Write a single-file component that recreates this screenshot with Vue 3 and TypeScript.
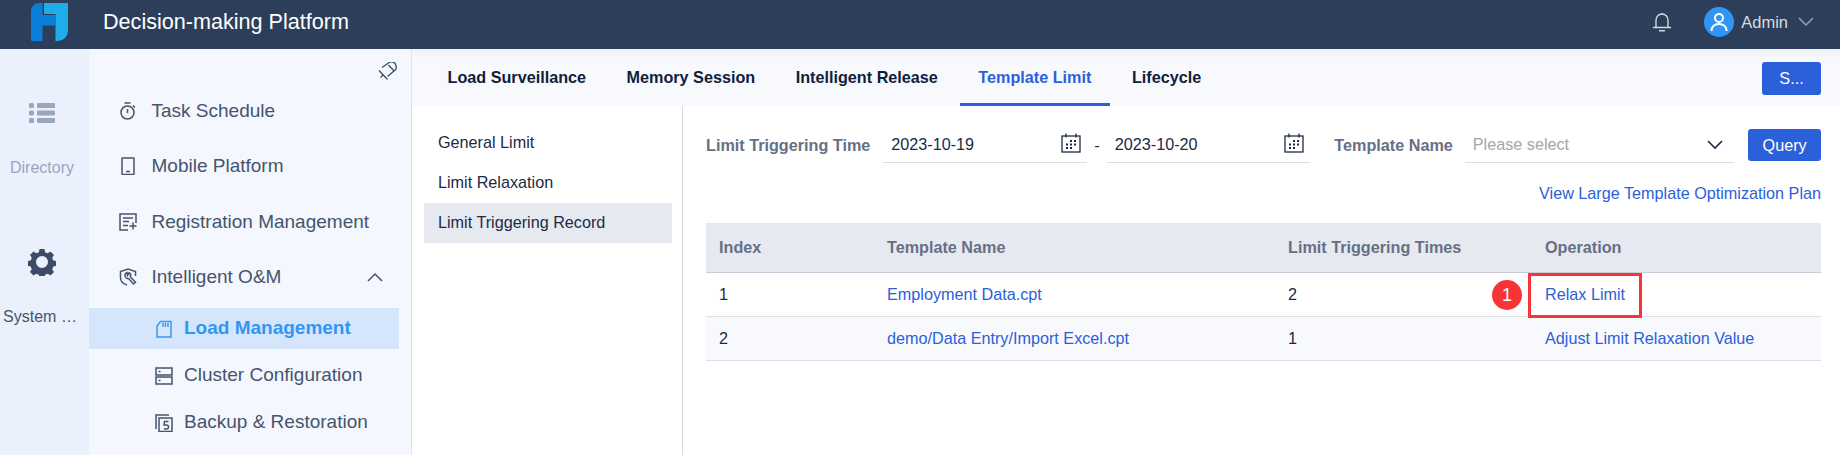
<template>
  <div class="app">
    <header class="topbar">
      <svg class="logo" viewBox="0 0 37 38" width="37" height="38">
        <path d="M8 0h3.500v12H24v10.500H11.500V38H1a1 1 0 0 1-1-1V8a8 8 0 0 1 8-8z" fill="#0a7fd8" />
        <path d="M13 0h23a1 1 0 0 1 1 1v27a10 10 0 0 1-10 10h-2.500V11H13z" fill="#1fade9" />
      </svg>
      <span class="brand">Decision-making Platform</span>
      <div class="topbar-right">
        <svg class="bell" viewBox="0 0 20 20" width="20" height="20" fill="none" stroke="#d4d8df" stroke-width="1.400">
          <path d="M1.500 15.500h17M4 15.500V8a6 6 0 0 1 12 0v7.500M7.500 18.800h5" stroke-linecap="round" />
          <path d="M10 1v1" />
        </svg>
        <span class="avatar">
          <svg viewBox="0 0 30 30" width="30" height="30" fill="none" stroke="#fff" stroke-width="2">
            <circle cx="15" cy="11" r="4" />
            <path d="M7.500 24c0-4.500 3.200-7 7.500-7s7.500 2.500 7.500 7" />
          </svg>
        </span>
        <span class="admin">Admin</span>
        <svg class="admin-arrow" viewBox="0 0 16 10" width="16" height="10" fill="none" stroke="#9aa3b0" stroke-width="1.500">
          <path d="M1 1l7 7 7-7" />
        </svg>
      </div>
    </header>

    <div class="body">
      <aside class="rail">
        <div class="rail-item">
          <svg viewBox="0 0 26 22" width="26" height="22" fill="#9aa6bc">
            <rect x="0" y="1" width="5" height="5" rx="1.500" />
            <rect x="8" y="1" width="18" height="5" rx="1" />
            <rect x="0" y="8.500" width="5" height="5" rx="1.500" />
            <rect x="8" y="8.500" width="18" height="5" rx="1" />
            <rect x="0" y="16" width="5" height="5" rx="1.500" />
            <rect x="8" y="16" width="18" height="5" rx="1" />
          </svg>
          <span class="rail-label">Directory</span>
        </div>
        <div class="rail-item rail-item--active">
          <svg viewBox="0 0 28 28" width="28" height="28">
            <path
              fill="#3d4b66"
              fill-rule="evenodd"
              d="M11.500 1h5l.6 3.200 2.600 1.100 2.800-1.800 3.500 3.500-1.800 2.800 1.100 2.600 3.200.6v5l-3.200.6-1.100 2.600 1.800 2.800-3.500 3.500-2.800-1.800-2.600 1.100-.6 3.200h-5l-.6-3.200-2.600-1.100-2.800 1.800-3.500-3.500 1.800-2.800-1.100-2.600-3.200-.6v-5l3.200-.6 1.100-2.600-1.800-2.800 3.500-3.500 2.800 1.800 2.600-1.100zM14 8a6 6 0 1 0 0 12 6 6 0 0 0 0-12z"
            />
          </svg>
          <span class="rail-label rail-label--dark">System …</span>
        </div>
      </aside>

      <nav class="sidebar">
        <div class="pin-row">
          <svg viewBox="0 0 20 20" width="20" height="20" fill="none" stroke="#3d4b66" stroke-width="1.300">
            <path d="M1 8.500l8.500 9M4 5.500L10.500 1M9.500 14.500l6.500-5.500" />
            <path d="M10.500 1a4.500 4.500 0 0 1 7.500 3c.8 2-.5 4-2 5L10.500 3" />
            <path d="M5 13l-2.500 2.500" />
          </svg>
        </div>
        <div v-for="item in menu" :key="item.label" class="menu-row">
          <svg class="menu-icon" viewBox="0 0 18 18" width="18" height="18" fill="none" stroke="#46546d" stroke-width="1.500" v-html="item.icon"></svg>
          <span>{{ item.label }}</span>
          <svg v-if="item.open" class="menu-caret" viewBox="0 0 16 10" width="16" height="10" fill="none" stroke="#46546d" stroke-width="1.500">
            <path d="M1 9l7-7 7 7" />
          </svg>
        </div>
        <div class="submenu">
          <div v-for="item in subMenu" :key="item.label" class="sub-row" :class="{ 'sub-row--active': item.active }">
            <svg class="menu-icon" viewBox="0 0 18 18" width="18" height="18" fill="none" :stroke="item.active ? '#3b96f5' : '#46546d'" stroke-width="1.500" v-html="item.icon"></svg>
            <span class="sub-label">{{ item.label }}</span>
          </div>
        </div>
      </nav>

      <main class="main">
        <div class="tabs">
          <div v-for="tab in tabs" :key="tab" class="tab" :class="{ 'tab--active': tab === 'Template Limit' }">{{ tab }}</div>
          <button class="btn btn--save">S...</button>
        </div>

        <div class="panel">
          <div class="side-tabs">
            <div v-for="item in sideTabs" :key="item" class="side-tab" :class="{ 'side-tab--active': item === 'Limit Triggering Record' }">{{ item }}</div>
          </div>

          <div class="content">
            <div class="filters">
              <label class="filter-label">Limit Triggering Time</label>
              <div class="field field--date field--start">
                <span>2023-10-19</span>
                <svg class="calendar" viewBox="0 0 20 20" width="20" height="20" v-html="calendarIcon"></svg>
              </div>
              <span class="dash">-</span>
              <div class="field field--date">
                <span>2023-10-20</span>
                <svg class="calendar" viewBox="0 0 20 20" width="20" height="20" v-html="calendarIcon"></svg>
              </div>
              <label class="filter-label filter-label--second">Template Name</label>
              <div class="field field--select">
                <span class="placeholder">Please select</span>
                <svg viewBox="0 0 16 10" width="16" height="10" fill="none" stroke="#1c2b45" stroke-width="1.600">
                  <path d="M1 1l7 7 7-7" />
                </svg>
              </div>
              <button class="btn btn--query">Query</button>
            </div>

            <div class="plan-row">
              <a class="link">View Large Template Optimization Plan</a>
            </div>

            <div class="table">
              <div class="tr tr--head">
                <div>Index</div>
                <div>Template Name</div>
                <div>Limit Triggering Times</div>
                <div>Operation</div>
              </div>
              <div v-for="(row, i) in rows" :key="row.index" class="tr" :class="{ 'tr--alt': i % 2 === 1 }">
                <div>{{ row.index }}</div>
                <div class="link">{{ row.name }}</div>
                <div>{{ row.times }}</div>
                <div class="link op-cell">
                  {{ row.op }}
                  <template v-if="i === 0">
                    <span class="mark"></span>
                    <span class="badge">1</span>
                  </template>
                </div>
              </div>
            </div>
          </div>
        </div>
      </main>
    </div>
  </div>
</template>

<script setup lang="ts">
const menu = [
  {
    label: 'Task Schedule',
    icon: '<circle cx="8.500" cy="10.500" r="6.500" /><path d="M5.500 1h6M8.500 7v4M14 3.500l2 2" />'
  },
  {
    label: 'Mobile Platform',
    icon: '<rect x="3" y="1" width="12" height="16.500" rx=".5" /><path d="M7 14.500h4" />'
  },
  {
    label: 'Registration Management',
    icon: '<path d="M17 10V1H1v16h8" /><path d="M4 5h10M4 8.500h6M4 12.500h5M10.500 13h7M14 9.500v7" />'
  },
  {
    label: 'Intelligent O&M',
    open: true,
    icon: '<path d="M16.500 8V3.500L9 1 1.500 3.500V10c0 3.500 3.500 6 6.500 7" /><path d="M8 4.500a3.500 3.500 0 0 0-2 3.500c.3 2 2.200 3 3.800 2.800L14.500 16l2-1.800-5-5.200c.4-1.500 0-3.500-1.500-4.200L8.500 7.500z" />'
  }
]

const subMenu = [
  {
    label: 'Load Management',
    active: true,
    icon: '<path d="M5.500 1.500h10.500V17H2V6z" /><path d="M8 3v4M10.500 3v4M13 3v4" />'
  },
  {
    label: 'Cluster Configuration',
    icon: '<rect x="1" y="1" width="16" height="7" /><rect x="1" y="10" width="16" height="7" /><path d="M3.500 4.500h2M3.500 13.500h2" />'
  },
  {
    label: 'Backup & Restoration',
    icon: '<path d="M1 15V1h13" /><path d="M17 4H4v13.500h13z" /><path d="M13.500 7.500h-4L9 11h2.500a2 2 0 0 1 0 4H9" />'
  }
]

const tabs = ['Load Surveillance', 'Memory Session', 'Intelligent Release', 'Template Limit', 'Lifecycle']
const sideTabs = ['General Limit', 'Limit Relaxation', 'Limit Triggering Record']

const calendarIcon =
  '<rect x="1" y="3" width="18" height="16" fill="none" stroke="#1c2b45" stroke-width="1.300" /><path d="M5 .5v4M15 .5v4" stroke="#1c2b45" stroke-width="1.300" /><g fill="#1c2b45"><rect x="9" y="7" width="2" height="2" /><rect x="13" y="7" width="2" height="2" /><rect x="5" y="10.500" width="2" height="2" /><rect x="9" y="10.500" width="2" height="2" /><rect x="13" y="10.500" width="2" height="2" /><rect x="5" y="14" width="2" height="2" /><rect x="9" y="14" width="2" height="2" /></g>'

const rows = [
  { index: 1, name: 'Employment Data.cpt', times: 2, op: 'Relax Limit' },
  { index: 2, name: 'demo/Data Entry/Import Excel.cpt', times: 1, op: 'Adjust Limit Relaxation Value' }
]
</script>

<style>
html,
body {
  margin: 0;
  overflow: hidden;
}
</style>

<style scoped>
.app {
  width: 1840px;
  height: 455px;
  overflow: hidden;
  font-family: 'Liberation Sans', Arial, sans-serif;
  font-size: 16.200px;
  color: #1c2b45;
  background: #fff;
}

.topbar {
  height: 49px;
  box-sizing: border-box;
  padding-bottom: 5px;
  display: flex;
  align-items: center;
  background: #2c3e5a;
  color: #fff;
}

.logo {
  margin-left: 31px;
  flex-shrink: 0;
}

.brand {
  margin-left: 35px;
  font-size: 21.600px;
}

.topbar-right {
  margin-left: auto;
  display: flex;
  align-items: center;
  padding-right: 26px;
}

.avatar {
  width: 30px;
  height: 30px;
  margin-left: 32px;
  border-radius: 50%;
  background: #3096f5;
  display: flex;
}

.admin {
  margin-left: 7px;
  font-size: 16.500px;
  color: #d8dce2;
}

.admin-arrow {
  margin-left: 10px;
}

.body {
  display: flex;
  height: 406px;
}

.rail {
  width: 89px;
  flex-shrink: 0;
  background: #eaf1fd;
  display: flex;
  flex-direction: column;
  align-items: center;
  padding: 53px 5px 0 0;
  box-sizing: border-box;
}

.rail-item {
  display: flex;
  flex-direction: column;
  align-items: center;
  height: 146px;
}

.rail-label {
  margin-top: 35px;
  font-size: 16px;
  white-space: nowrap;
  color: #9aa6bc;
}

.rail-label--dark {
  margin-top: 32px;
  margin-right: 4px;
  color: #46546d;
}

.sidebar {
  width: 323px;
  flex-shrink: 0;
  background: #f4f7fe;
  border-right: 1px solid #dde2ec;
  box-sizing: border-box;
  color: #46546d;
  font-size: 19px;
}

.pin-row {
  height: 34px;
  box-sizing: border-box;
  padding: 13px 13px 0 0;
  display: flex;
  justify-content: flex-end;
}

.menu-row {
  height: 55.500px;
  display: flex;
  align-items: center;
  padding-left: 30px;
}

.menu-icon {
  flex-shrink: 0;
  margin-right: 14.500px;
}

.menu-caret {
  margin-left: auto;
  margin-right: 28px;
}

.submenu {
  margin-top: 3px;
  display: flex;
  flex-direction: column;
  gap: 6px;
}

.sub-row {
  height: 41px;
  margin-right: 12px;
  display: flex;
  align-items: center;
  padding-left: 66px;
}

.sub-row .menu-icon {
  margin-right: 11px;
}

.sub-label {
  margin-top: -2px;
}

.sub-row--active {
  background: #d5e6fc;
  color: #3096f5;
  font-weight: 700;
}

.main {
  flex: 1;
  display: flex;
  flex-direction: column;
  min-width: 0;
}

.tabs {
  height: 57px;
  flex-shrink: 0;
  display: flex;
  background: linear-gradient(#eff1f6, #f8f9fd 10px);
  padding: 0 19px 0 17px;
  font-weight: 700;
  color: #0f1e3c;
  align-items: stretch;
}

.tab {
  padding: 3px 18.500px 0;
  margin-right: 3.500px;
  display: flex;
  align-items: center;
  border-bottom: 3px solid transparent;
}

.tab--active {
  color: #2c60da;
  border-bottom-color: #2c60da;
}

.btn {
  border: 0;
  border-radius: 3px;
  background: #2c60da;
  color: #fff;
  font-family: inherit;
  font-size: 16.200px;
  padding: 0;
}

.btn--save {
  width: 59px;
  height: 33px;
  margin: 13px 0 0 auto;
}

.panel {
  flex: 1;
  display: flex;
  background: #fff;
}

.side-tabs {
  width: 271px;
  flex-shrink: 0;
  box-sizing: border-box;
  padding: 17px 10px 0 12px;
  border-right: 1px solid #d8dbe2;
}

.side-tab {
  height: 40px;
  box-sizing: border-box;
  padding: 0 0 2px 14px;
  display: flex;
  align-items: center;
  color: #1c2b45;
}

.side-tab--active {
  background: #e6e9f0;
}

.content {
  flex: 1;
  min-width: 0;
  padding: 23px 19px 0 23px;
}

.filters {
  display: flex;
  align-items: flex-start;
  height: 34px;
}

.filter-label {
  line-height: 32px;
  font-weight: 700;
  color: #667085;
  white-space: nowrap;
}

.filter-label--second {
  margin-left: 24px;
}

.field {
  height: 34px;
  box-sizing: border-box;
  padding-bottom: 2px;
  border-bottom: 1px solid #dcdde3;
  display: flex;
  align-items: center;
  justify-content: space-between;
}

.field--date {
  width: 204px;
  padding-left: 8px;
  padding-right: 6px;
}

.field--start {
  margin-left: 13px;
}

.calendar {
  margin-top: -4px;
}

.dash {
  width: 20px;
  line-height: 32px;
  text-align: center;
}

.field--select {
  width: 270px;
  margin-left: 12px;
  padding-left: 8px;
  padding-right: 11px;
}

.placeholder {
  color: #a3a6ad;
}

.btn--query {
  width: 73px;
  height: 32px;
  margin-left: 14px;
}

.plan-row {
  display: flex;
  justify-content: flex-end;
  margin-top: 21px;
  line-height: 18px;
}

.link {
  color: #2c60da;
}

.table {
  margin-top: 21px;
}

.tr {
  display: grid;
  grid-template-columns: 168px 401px 257px 1fr;
  height: 44px;
  align-items: center;
  border-bottom: 1px solid #dcdfe7;
  box-sizing: border-box;
  padding-left: 13px;
}

.tr--head {
  height: 50px;
  background: #e6e9f0;
  font-weight: 700;
  color: #667085;
  border-bottom-color: #c9ccd8;
}

.tr--alt {
  background: #f8f9fd;
}

.op-cell {
  position: relative;
}

.mark {
  position: absolute;
  left: -17px;
  top: -12px;
  width: 114px;
  height: 45px;
  box-sizing: border-box;
  border: 3px solid #f83434;
}

.badge {
  position: absolute;
  left: -53px;
  top: -5px;
  width: 30px;
  height: 30px;
  border-radius: 50%;
  background: #f83434;
  color: #fff;
  font-size: 18px;
  display: flex;
  align-items: center;
  justify-content: center;
}
</style>
